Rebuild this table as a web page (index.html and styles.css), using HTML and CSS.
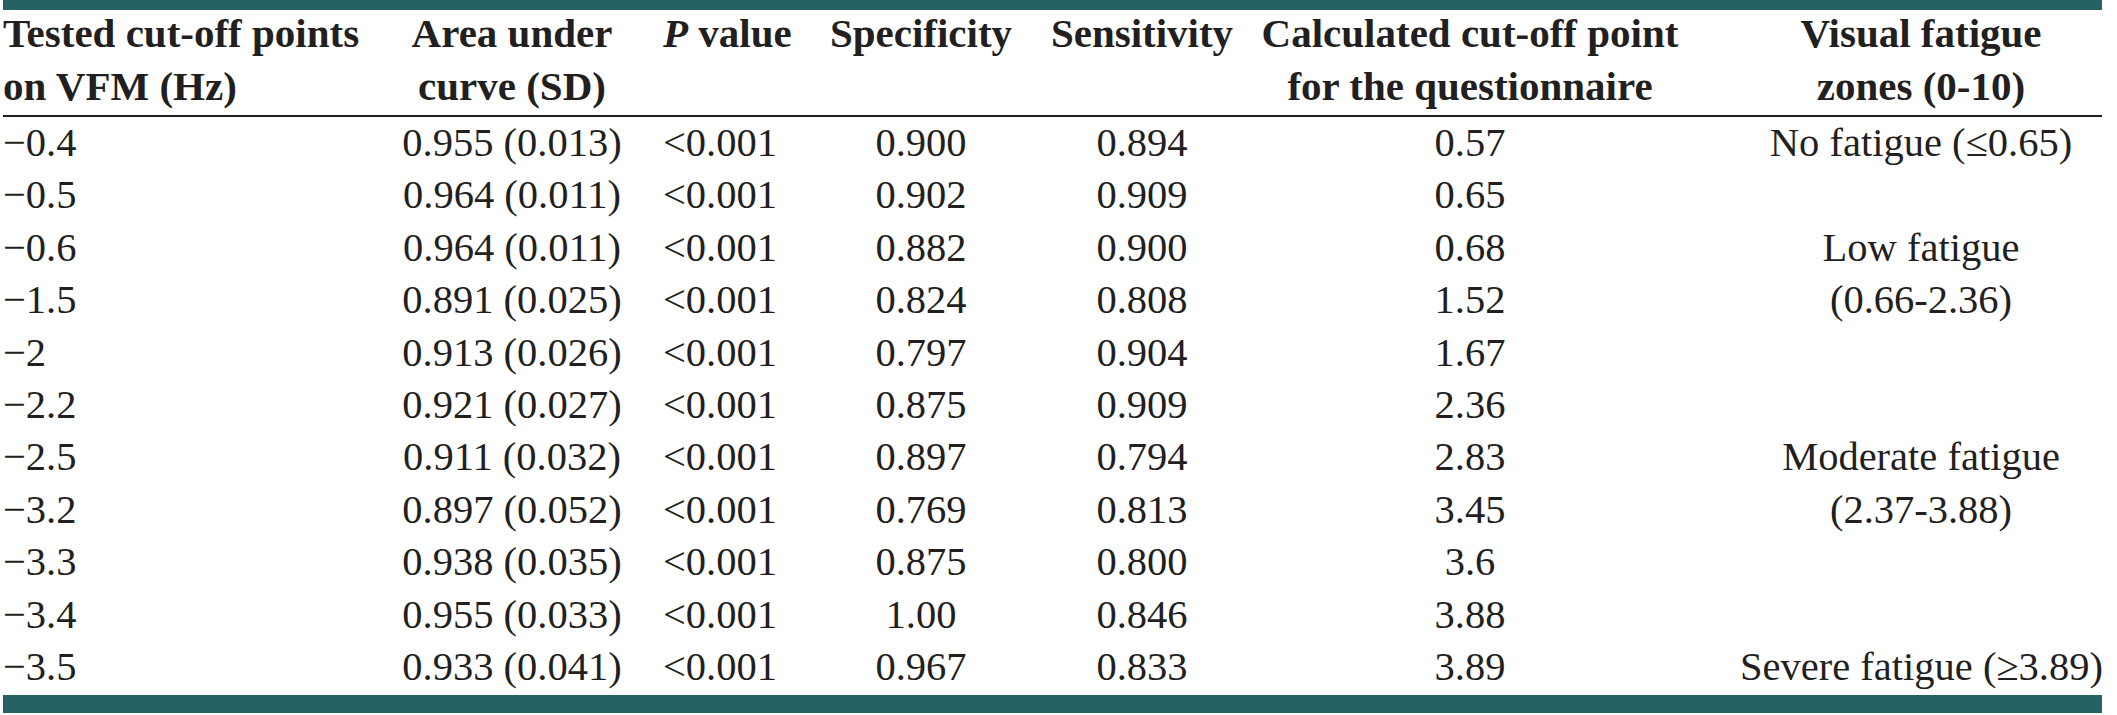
FILE: index.html
```html
<!DOCTYPE html>
<html lang="en">
<head>
<meta charset="utf-8">
<title>Visual fatigue cut-off points</title>
<link rel="stylesheet" href="styles.css">
</head>
<body>
<div class="table-wrap">
  <table class="data-table">
    <colgroup>
      <col class="c1"><col class="c2"><col class="c3"><col class="c4"><col class="c5"><col class="c6"><col class="c7">
    </colgroup>
    <thead>
      <tr>
        <th class="left">Tested cut-off points<br>on VFM (Hz)</th>
        <th>Area under<br>curve (SD)</th>
        <th class="pval"><i>P</i> value</th>
        <th>Specificity</th>
        <th>Sensitivity</th>
        <th>Calculated cut-off point<br>for the questionnaire</th>
        <th class="zone">Visual fatigue<br>zones (0-10)</th>
      </tr>
    </thead>
    <tbody>
      <tr><td class="left">&minus;0.4</td><td>0.955 (0.013)</td><td class="pval">&lt;0.001</td><td>0.900</td><td>0.894</td><td>0.57</td><td class="zone">No fatigue (&le;0.65)</td></tr>
      <tr><td class="left">&minus;0.5</td><td>0.964 (0.011)</td><td class="pval">&lt;0.001</td><td>0.902</td><td>0.909</td><td>0.65</td><td class="zone"></td></tr>
      <tr><td class="left">&minus;0.6</td><td>0.964 (0.011)</td><td class="pval">&lt;0.001</td><td>0.882</td><td>0.900</td><td>0.68</td><td class="zone">Low fatigue</td></tr>
      <tr><td class="left">&minus;1.5</td><td>0.891 (0.025)</td><td class="pval">&lt;0.001</td><td>0.824</td><td>0.808</td><td>1.52</td><td class="zone">(0.66-2.36)</td></tr>
      <tr><td class="left">&minus;2</td><td>0.913 (0.026)</td><td class="pval">&lt;0.001</td><td>0.797</td><td>0.904</td><td>1.67</td><td class="zone"></td></tr>
      <tr><td class="left">&minus;2.2</td><td>0.921 (0.027)</td><td class="pval">&lt;0.001</td><td>0.875</td><td>0.909</td><td>2.36</td><td class="zone"></td></tr>
      <tr><td class="left">&minus;2.5</td><td>0.911 (0.032)</td><td class="pval">&lt;0.001</td><td>0.897</td><td>0.794</td><td>2.83</td><td class="zone">Moderate fatigue</td></tr>
      <tr><td class="left">&minus;3.2</td><td>0.897 (0.052)</td><td class="pval">&lt;0.001</td><td>0.769</td><td>0.813</td><td>3.45</td><td class="zone">(2.37-3.88)</td></tr>
      <tr><td class="left">&minus;3.3</td><td>0.938 (0.035)</td><td class="pval">&lt;0.001</td><td>0.875</td><td>0.800</td><td>3.6</td><td class="zone"></td></tr>
      <tr><td class="left">&minus;3.4</td><td>0.955 (0.033)</td><td class="pval">&lt;0.001</td><td>1.00</td><td>0.846</td><td>3.88</td><td class="zone"></td></tr>
      <tr><td class="left">&minus;3.5</td><td>0.933 (0.041)</td><td class="pval">&lt;0.001</td><td>0.967</td><td>0.833</td><td>3.89</td><td class="zone">Severe fatigue (&ge;3.89)</td></tr>
    </tbody>
  </table>
</div>
</body>
</html>
```
FILE: styles.css
```css
html, body {
  margin: 0;
  padding: 0;
  background: #ffffff;
}

body {
  font-family: "Liberation Serif", "Times New Roman", serif;
  color: #231f20;
}

.table-wrap {
  width: 2099px;
  margin-left: 3px;
  border-top: 10px solid #246263;
  border-bottom: 18px solid #246263;
  padding-bottom: 1.6px;
}

.data-table {
  width: 2099px;
  margin-top: -3px;
  border-collapse: collapse;
  table-layout: fixed;
  font-size: 40.5px;
}

.c1 { width: 387px; }
.c2 { width: 244px; }
.c3 { width: 176px; }
.c4 { width: 222px; }
.c5 { width: 220px; }
.c6 { width: 436px; }
.c7 { width: 414px; }

.data-table th {
  font-size: 41px;
  font-weight: bold;
  line-height: 52.5px;
  padding: 0 0 3px 0;
  text-align: center;
  vertical-align: top;
  white-space: nowrap;
  border-bottom: 2px solid #231f20;
}

.data-table td {
  line-height: 52.4px;
  padding: 0;
  text-align: center;
  vertical-align: top;
  white-space: nowrap;
}

.data-table .left {
  text-align: left;
}

.data-table .pval {
  text-align: left;
  padding-left: 29px;
}

.data-table .zone {
  padding-left: 52px;
}
```
